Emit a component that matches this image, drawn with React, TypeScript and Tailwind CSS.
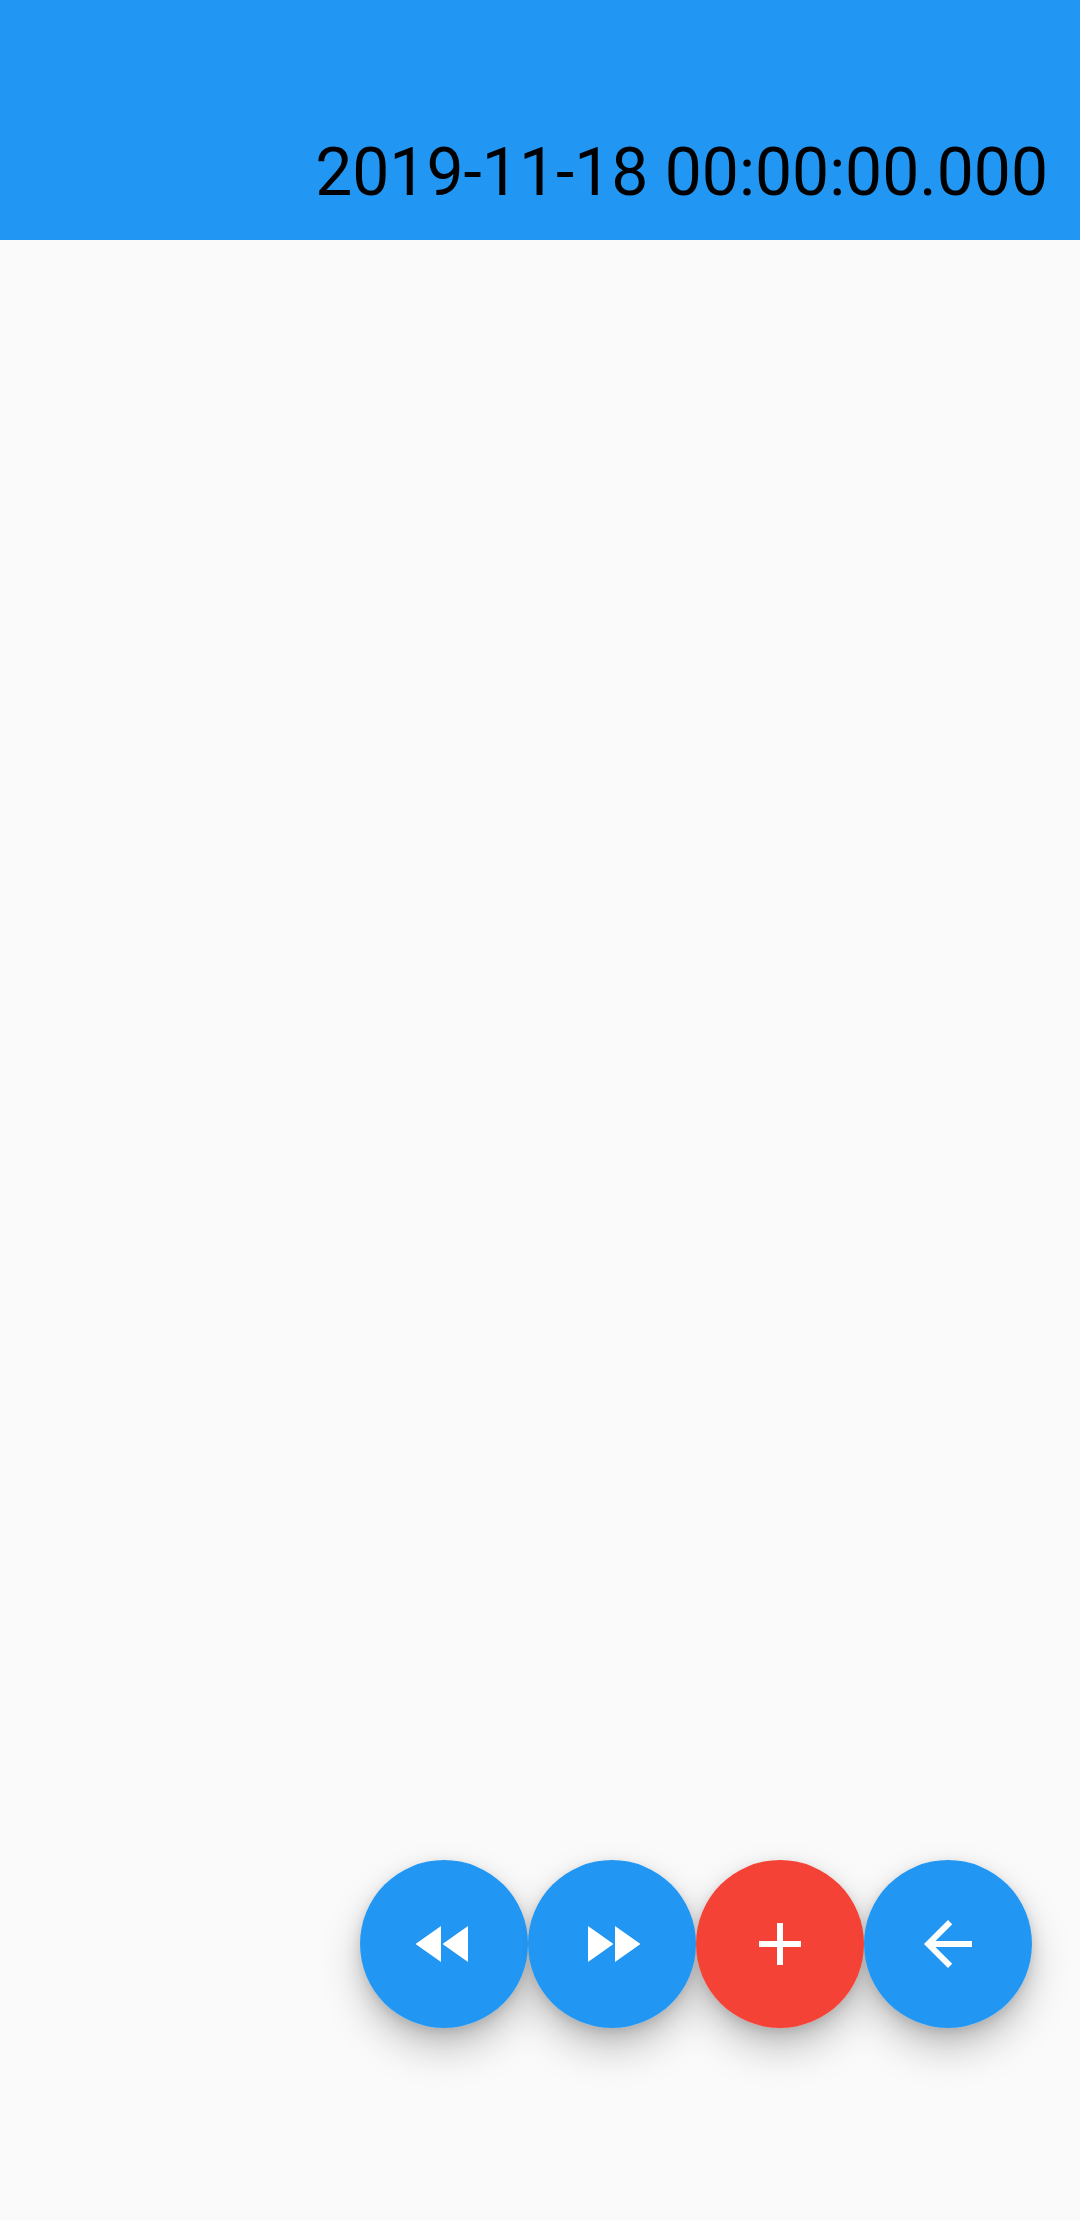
import React from "react";

function Fab({ color, d }: { color: string; d: string }) {
  return (
    <button
      className={`relative flex h-[168px] w-[168px] items-center justify-center rounded-full ${color} shadow-[0_2px_8px_0_rgba(0,0,0,0.06)]`}
    >
      <span className="absolute inset-0 -z-10 rounded-full shadow-[0_21px_42px_-3px_rgba(0,0,0,0.25),0_6px_18px_0_rgba(0,0,0,0.1)]" />
      <svg viewBox="0 0 24 24" className="h-[72px] w-[72px] fill-white">
        <path d={d} />
      </svg>
    </button>
  );
}

export default function App() {
  return (
    <div className="flex h-[2220px] w-[1080px] flex-col bg-[#fafafa]">
      <header className="flex h-[240px] items-end justify-end bg-[#2196f3] pb-[28px] pr-[32px]">
        <span className="font-['Roboto',sans-serif] text-[66px] leading-[78px] text-black">
          2019-11-18 00:00:00.000
        </span>
      </header>
      <main className="isolate flex flex-1 items-end justify-end pb-[192px] pr-[48px]">
        <Fab color="bg-[#2196f3]" d="M11 18V6l-8.5 6 8.5 6zm.5-6l8.5 6V6l-8.5 6z" />
        <Fab color="bg-[#2196f3]" d="M4 18l8.5-6L4 6v12zm9-12v12l8.5-6L13 6z" />
        <Fab color="bg-[#f44336]" d="M19 13h-6v6h-2v-6H5v-2h6V5h2v6h6v2z" />
        <Fab color="bg-[#2196f3]" d="M20 11H7.83l5.59-5.59L12 4l-8 8 8 8 1.41-1.41L7.83 13H20v-2z" />
      </main>
    </div>
  );
}
